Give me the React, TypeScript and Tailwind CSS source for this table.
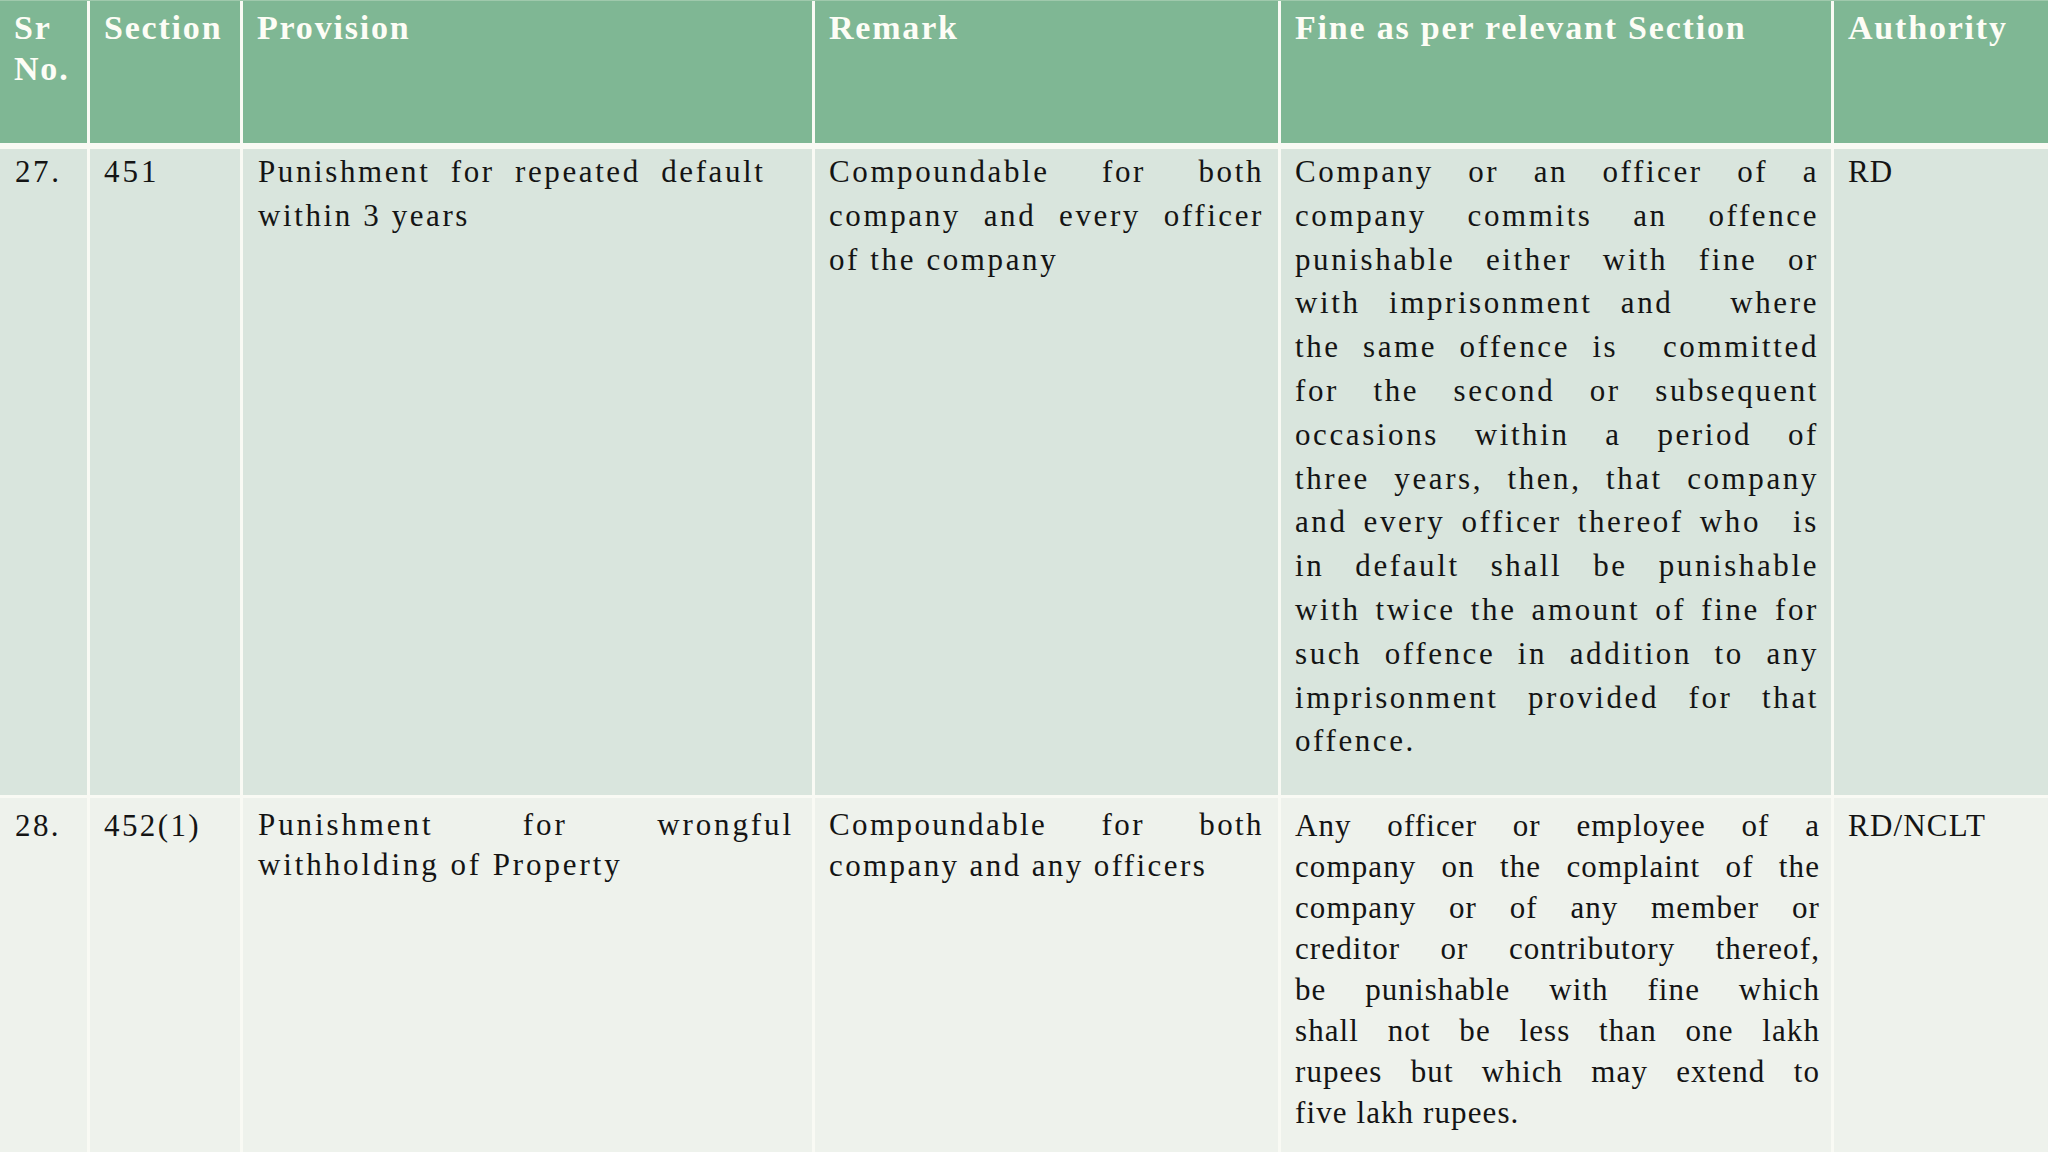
import React from "react";

type Line = { t: string; j?: boolean };

const J = (t: string): Line => ({ t, j: true });
const L = (t: string): Line => ({ t });

function Lines({ lines }: { lines: Line[] }) {
  return (
    <>
      {lines.map((l, i) =>
        l.j ? (
          <div key={i} className="whitespace-pre text-justify [text-align-last:justify]">
            {l.t}
          </div>
        ) : (
          <div key={i} className="whitespace-pre">
            {l.t}
          </div>
        )
      )}
    </>
  );
}

const font = { fontFamily: '"Liberation Serif", "Times New Roman", serif' };

export default function App() {
  const cols = "grid grid-cols-[87px_150px_569px_463px_550px_1fr] gap-x-[3px]";
  return (
    <div className="w-[2048px] h-[1152px] overflow-hidden bg-[#f9faf4] text-[#141414]" style={font}>
      {/* Header */}
      <div className={`${cols} h-[143px] mb-[6px] border-t border-[#9fc9ac]`}>
        {["Sr\nNo.", "Section", "Provision", "Remark", "Fine as per relevant Section", "Authority"].map((h, i) => (
          <div
            key={i}
            className="bg-[#7fb794] text-[#fdfdf6] font-bold text-[34px] leading-[41px] tracking-[1.8px] whitespace-pre pt-[6px] pl-[14px]"
          >
            {h}
          </div>
        ))}
      </div>

      {/* Row 27 */}
      <div className={`${cols} h-[646px] mb-[3px] text-[31px] leading-[43.8px] tracking-[2.6px]`}>
        <div className="bg-[#d9e5dd] pt-[1px] pl-[15px]">27.</div>
        <div className="bg-[#d9e5dd] pt-[1px] pl-[14px] tracking-[3px]">451</div>
        <div className="bg-[#d9e5dd] pt-[1px] pl-[15px] pr-[18px]">
          <div className="whitespace-pre [word-spacing:10px]">Punishment for repeated default</div>
          <div className="whitespace-pre">within 3 years</div>
        </div>
        <div className="bg-[#d9e5dd] pt-[1px] pl-[14px] pr-[14px]">
          <Lines lines={[J("Compoundable for both"), J("company and every officer"), L("of the company")]} />
        </div>
        <div className="bg-[#d9e5dd] pt-[1px] pl-[14px] pr-[12px]">
          <Lines
            lines={[
              J("Company or an officer of a"),
              J("company commits an offence"),
              J("punishable either with fine or"),
              J("with imprisonment and  where"),
              J("the same offence is  committed"),
              J("for the second or subsequent"),
              J("occasions within a period of"),
              J("three years, then, that company"),
              J("and every officer thereof who  is"),
              J("in default shall be punishable"),
              J("with twice the amount of fine for"),
              J("such offence in addition to any"),
              J("imprisonment provided for that"),
              L("offence."),
            ]}
          />
        </div>
        <div className="bg-[#d9e5dd] pt-[1px] pl-[14px] tracking-[1px]">RD</div>
      </div>

      {/* Row 28 */}
      <div className={`${cols} h-[360px] text-[31px] leading-[41px] tracking-[2.4px]`}>
        <div className="bg-[#eef2ec] pt-[7px] pl-[15px]">28.</div>
        <div className="bg-[#eef2ec] pt-[7px] pl-[14px]">452(1)</div>
        <div className="bg-[#eef2ec] pt-[7px] pl-[15px] pr-[18px] leading-[40px] tracking-[2.9px]">
          <Lines lines={[J("Punishment for wrongful"), L("withholding of Property")]} />
        </div>
        <div className="bg-[#eef2ec] pt-[7px] pl-[14px] pr-[14px] leading-[40.5px]">
          <Lines lines={[J("Compoundable for both"), L("company and any officers")]} />
        </div>
        <div className="bg-[#eef2ec] pt-[7px] pl-[14px] pr-[11px] tracking-[1.1px]">
          <Lines
            lines={[
              J("Any officer or employee of a"),
              J("company on the complaint of the"),
              J("company or of any member or"),
              J("creditor or contributory thereof,"),
              J("be punishable with fine which"),
              J("shall not be less than one lakh"),
              J("rupees but which may extend to"),
              L("five lakh rupees."),
            ]}
          />
        </div>
        <div className="bg-[#eef2ec] pt-[7px] pl-[14px] tracking-[1.2px]">RD/NCLT</div>
      </div>
    </div>
  );
}
